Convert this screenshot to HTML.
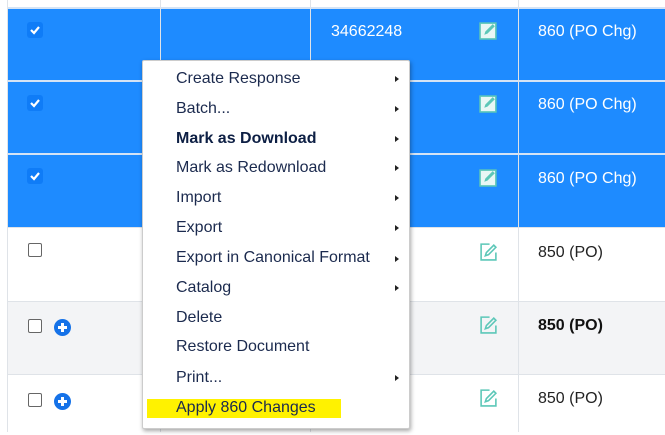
<!DOCTYPE html>
<html><head><style>
body{margin:0;width:665px;height:432px;overflow:hidden;background:#fff;font-family:"Liberation Sans",sans-serif;position:relative}
.row{position:absolute;left:7px;width:680px;border-top:1px solid #dfe3e8}
.blue{background:#1e8bff;border-top:2px solid #d4e3f5}
.grey{background:#f3f4f6}
.vl{position:absolute;top:0;width:1px;background:#dfe3e8;height:432px}
.cb{position:absolute;left:27px;width:16px;height:16px;border-radius:3px}
.cb.on{background:#0f7cf7;}
.cb.off{left:28px;border:1.5px solid #666;background:#fff;width:12px;height:12px;border-radius:2px}
.t{position:absolute;font-size:16px}
.w{color:#fff}
.edit{position:absolute;left:479px;width:19px;height:19px}
.plus{position:absolute;left:54px;width:17px;height:17px;border-radius:50%;background:#1572e8}
.plus:before{content:"";position:absolute;left:4px;top:7px;width:9px;height:3px;background:#fff}
.plus:after{content:"";position:absolute;left:7px;top:4px;width:3px;height:9px;background:#fff}
.menu{position:absolute;left:142px;top:60px;width:266px;height:367px;background:#fff;border:1px solid #ccc;box-shadow:1px 2px 4px rgba(0,0,0,.35);border-radius:2px}
.mi{position:absolute;left:33px;font-size:16px;color:#1b2a4e}
.ar{position:absolute;left:252px;width:0;height:0;border-left:4px solid #222;border-top:3px solid transparent;border-bottom:3px solid transparent}
</style></head><body>
<div class="row blue" style="top:7px;height:71px"></div>
<div class="row blue" style="top:80px;height:71px"></div>
<div class="row blue" style="top:153px;height:73px"></div>
<div class="row" style="top:227px;height:73px"></div>
<div class="row grey" style="top:301px;height:73px"></div>
<div class="row" style="top:374px;height:60px"></div>
<div class="vl" style="left:7px"></div>
<div class="vl" style="left:160px"></div>
<div class="vl" style="left:310px"></div>
<div class="vl" style="left:518px"></div>

<div class="cb on" style="top:22px"><svg width="16" height="16"><path d="M4 8l3 3 5-6" stroke="#fff" stroke-width="2.2" fill="none"/></svg></div>
<div class="cb on" style="top:95px"><svg width="16" height="16"><path d="M4 8l3 3 5-6" stroke="#fff" stroke-width="2.2" fill="none"/></svg></div>
<div class="cb on" style="top:168px"><svg width="16" height="16"><path d="M4 8l3 3 5-6" stroke="#fff" stroke-width="2.2" fill="none"/></svg></div>
<div class="cb off" style="top:243px"></div>
<div class="cb off" style="top:319px"></div><div class="plus" style="top:319px"></div>
<div class="cb off" style="top:393px"></div><div class="plus" style="top:393px"></div>

<div class="t w" style="left:331px;top:23px">34662248</div>
<div class="t w" style="left:538px;top:23px">860 (PO Chg)</div>
<div class="t w" style="left:538px;top:96px">860 (PO Chg)</div>
<div class="t w" style="left:538px;top:170px">860 (PO Chg)</div>
<div class="t" style="left:538px;top:244px;color:#222">850 (PO)</div>
<div class="t" style="left:538px;top:317px;color:#111;font-weight:bold">850 (PO)</div>
<div class="t" style="left:538px;top:390px;color:#222">850 (PO)</div>

<svg class="edit" style="top:21px" viewBox="0 0 18 18"><rect x="1" y="2" width="15" height="15" fill="#e8f7f5" stroke="#5cc7b8" stroke-width="1.5"/><path d="M5 13l1-3 7-7 2 2-7 7z" fill="#5cc7b8"/></svg>
<svg class="edit" style="top:94px" viewBox="0 0 18 18"><rect x="1" y="2" width="15" height="15" fill="#e8f7f5" stroke="#5cc7b8" stroke-width="1.5"/><path d="M5 13l1-3 7-7 2 2-7 7z" fill="#5cc7b8"/></svg>
<svg class="edit" style="top:168px" viewBox="0 0 18 18"><rect x="1" y="2" width="15" height="15" fill="#e8f7f5" stroke="#5cc7b8" stroke-width="1.5"/><path d="M5 13l1-3 7-7 2 2-7 7z" fill="#5cc7b8"/></svg>
<svg class="edit" style="top:242px" viewBox="0 0 18 18"><path d="M10 2H2v15h14v-7" fill="none" stroke="#5cc7b8" stroke-width="1.5"/><path d="M6 13l1-3 7-7 2 2-7 7z" fill="none" stroke="#5cc7b8" stroke-width="1.5"/></svg>
<svg class="edit" style="top:315px" viewBox="0 0 18 18"><path d="M10 2H2v15h14v-7" fill="none" stroke="#5cc7b8" stroke-width="1.5"/><path d="M6 13l1-3 7-7 2 2-7 7z" fill="none" stroke="#5cc7b8" stroke-width="1.5"/></svg>
<svg class="edit" style="top:388px" viewBox="0 0 18 18"><path d="M10 2H2v15h14v-7" fill="none" stroke="#5cc7b8" stroke-width="1.5"/><path d="M6 13l1-3 7-7 2 2-7 7z" fill="none" stroke="#5cc7b8" stroke-width="1.5"/></svg>

<div class="menu">
<div style="position:absolute;left:4px;top:338px;width:194px;height:19px;background:#fff200"></div>
<div class="mi" style="top:9px">Create Response</div><div class="ar" style="top:15px"></div>
<div class="mi" style="top:39px">Batch...</div><div class="ar" style="top:45px"></div>
<div class="mi" style="top:69px;font-weight:bold;color:#0d1f44">Mark as Download</div><div class="ar" style="top:75px"></div>
<div class="mi" style="top:98px">Mark as Redownload</div><div class="ar" style="top:104px"></div>
<div class="mi" style="top:128px">Import</div><div class="ar" style="top:134px"></div>
<div class="mi" style="top:158px">Export</div><div class="ar" style="top:164px"></div>
<div class="mi" style="top:188px">Export in Canonical Format</div><div class="ar" style="top:195px"></div>
<div class="mi" style="top:218px">Catalog</div><div class="ar" style="top:224px"></div>
<div class="mi" style="top:248px">Delete</div>
<div class="mi" style="top:277px">Restore Document</div>
<div class="mi" style="top:308px">Print...</div><div class="ar" style="top:314px"></div>
<div class="mi" style="top:338px">Apply 860 Changes</div>
</div>
</body></html>
